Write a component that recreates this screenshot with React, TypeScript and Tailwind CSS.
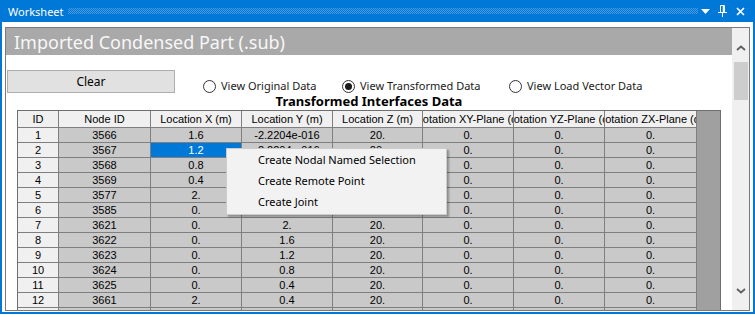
const rows: string[][] = [
  ["1", "3566", "1.6", "-2.2204e-016", "20."],
  ["2", "3567", "1.2", "-2.2204e-016", "20."],
  ["3", "3568", "0.8", "-2.2204e-016", "20."],
  ["4", "3569", "0.4", "-2.2204e-016", "20."],
  ["5", "3577", "2.", "0.", "20."],
  ["6", "3585", "0.", "0.", "20."],
  ["7", "3621", "0.", "2.", "20."],
  ["8", "3622", "0.", "1.6", "20."],
  ["9", "3623", "0.", "1.2", "20."],
  ["10", "3624", "0.", "0.8", "20."],
  ["11", "3625", "0.", "0.4", "20."],
  ["12", "3661", "2.", "0.4", "20."],
  ["13", "3662", "2.", "0.8", "20."],
];

const headers = [
  "ID",
  "Node ID",
  "Location X (m)",
  "Location Y (m)",
  "Location Z (m)",
  "Rotation XY-Plane (deg)",
  "Rotation YZ-Plane (deg)",
  "Rotation ZX-Plane (deg)",
];

const cellBase =
  "flex items-center justify-center overflow-hidden whitespace-nowrap border-r border-b border-[#7f7f7f]";

const Radio = ({ label, checked, width }: { label: string; checked?: boolean; width: string }) => (
  <div className={`flex items-center gap-[5px] ${width}`}>
    <span className="flex h-[13px] w-[13px] items-center justify-center rounded-full border border-[#333] bg-white">
      {checked && <span className="h-[7px] w-[7px] rounded-full bg-[#1a1a1a]" />}
    </span>
    <span className="text-[11px] leading-[14px] text-[#1a1a1a]">{label}</span>
  </div>
);

export default function App() {
  return (
    <div className="relative flex h-[317px] w-[755px] flex-col bg-white font-['Noto_Sans',sans-serif]">
      {/* title bar */}
      <div className="flex h-[22px] items-center bg-[#0078d7] text-white">
        <span className="ml-[8px] text-[11px] leading-none">Worksheet</span>
        <div className="ml-[4px] h-[6px] flex-1 bg-[repeating-conic-gradient(#4a98de_0_25%,transparent_0_50%)] bg-[length:2px_2px]" />
        <div className="ml-[3px] mr-[10px] flex items-center gap-[8px]">
          <svg width="9" height="5" viewBox="0 0 9 5">
            <path d="M0 0H9L4.5 5Z" fill="white" />
          </svg>
          <svg width="9" height="12" viewBox="0 0 9 12">
            <path d="M2.5 0.5H6.5V7M2.5 0.5V7M0 7.5H9M4.5 7.5V12" stroke="white" strokeWidth="1" fill="none" />
            <path d="M5.5 0.5V7" stroke="white" strokeWidth="1.5" />
          </svg>
          <svg width="9" height="9" viewBox="0 0 9 9" className="ml-[1px]">
            <path d="M1 1L8 8M8 1L1 8" stroke="white" strokeWidth="1.7" />
          </svg>
        </div>
      </div>

      {/* window body */}
      <div className="flex h-[292px] flex-col border-x-2 border-b-2 border-[#0078d7] px-[3px] pt-[5px] pb-[1px]">
        <div className="flex h-[284px] border border-[#7a7a7a]">
          {/* main column */}
          <div className="flex min-w-0 flex-1 flex-col">
            <div className="flex h-[27px] items-center bg-[#a9a9a9] pl-[8px] text-[18px] leading-none text-[#f7f7f7]">
              Imported Condensed Part (.sub)
            </div>

            <div className="flex">
              <button className="ml-[1px] mt-[15px] h-[23px] w-[168px] border border-[#adadad] bg-[#e1e1e1] text-[12px] text-black">
                Clear
              </button>
              <div className="ml-[28px] mt-[24px] flex">
                <Radio label="View Original Data" width="w-[139px]" />
                <Radio label="View Transformed Data" checked width="w-[167px]" />
                <Radio label="View Load Vector Data" width="w-[180px]" />
              </div>
            </div>

            <div className="h-[17px] text-center text-[13px] font-bold leading-[17px] text-black">
              Transformed Interfaces Data
            </div>

            <div className="ml-[11px] w-[704px] flex-1 overflow-hidden border-x border-t border-[#6e6e6e] bg-[#a0a0a0] font-['Liberation_Sans',sans-serif] text-[11px] text-black">
              <div className="grid w-[679px] grid-cols-[41px_92px_91px_91px_90px_91px_91px_92px] grid-rows-[17px] auto-rows-[15px]">
                {headers.map((h, j) => (
                  <div key={h} className={`${cellBase} bg-[#f0f0f0] ${j > 4 ? "pl-[12px]" : ""}`}>
                    {h}
                  </div>
                ))}
                {rows.map((r, i) => {
                  const cells = [...r, "0.", "0.", "0."];
                  return cells.map((c, j) => {
                    const selected = i === 1 && j === 2;
                    const bg = selected
                      ? "bg-[#0078d7] text-white"
                      : j === 0
                        ? "bg-[#f0f0f0]"
                        : "bg-[#c9c9c9]";
                    return (
                      <div key={`${i}-${j}`} className={`${cellBase} ${bg}`}>
                        {c}
                      </div>
                    );
                  });
                })}
              </div>
            </div>
          </div>

          {/* scrollbar */}
          <div className="flex w-[17px] flex-col items-center bg-[#f0f0f0]">
            <svg width="10" height="6" viewBox="0 0 10 6" className="mt-[17px]">
              <path d="M1 5L5 1.5L9 5" stroke="#606060" strokeWidth="1.8" fill="none" />
            </svg>
            <div className="mt-[11px] h-[38px] w-[14px] bg-[#cdcdcd]" />
            <div className="flex-1" />
            <svg width="10" height="6" viewBox="0 0 10 6" className="mb-[16px]">
              <path d="M1 1L5 4.5L9 1" stroke="#606060" strokeWidth="1.8" fill="none" />
            </svg>
          </div>
        </div>
      </div>

      {/* context menu */}
      <div className="absolute left-[226px] top-[148px] flex h-[67px] w-[221px] flex-col border border-[#cccccc] bg-[#f2f2f2] py-[1px] text-[11px] text-black shadow-[2px_2px_2px_rgba(0,0,0,0.3)]">
        <div className="flex h-[22px] items-center pl-[31px]">Create Nodal Named Selection</div>
        <div className="flex h-[22px] items-center pl-[31px]">Create Remote Point</div>
        <div className="flex h-[22px] items-center pl-[31px]">Create Joint</div>
      </div>
    </div>
  );
}
